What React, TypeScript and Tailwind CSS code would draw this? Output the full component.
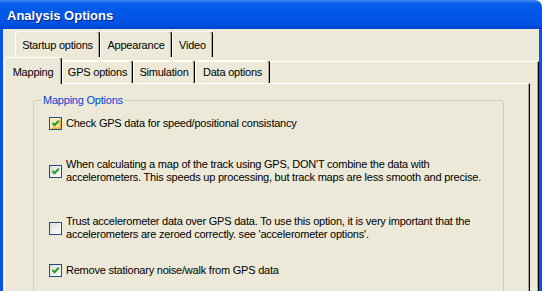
import React from "react";

const Check = ({ checked, hot }: { checked: boolean; hot?: boolean }) => (
  <span
    className={
      hot
        ? "flex h-[13px] w-[13px] shrink-0 items-center justify-center border border-[#1c5180] bg-[linear-gradient(135deg,#fff0cf,#fbd58a)] shadow-[inset_1px_1px_0_#fff0cf,inset_-1px_-1px_0_#f8b330,inset_2px_2px_0_#fde2a8,inset_-2px_-2px_0_#f9c566]"
        : "flex h-[13px] w-[13px] shrink-0 items-center justify-center border border-[#1c5180] bg-[linear-gradient(135deg,#dcdcd7,#ffffff)]"
    }
  >
    {checked && (
      <svg width="11" height="11" viewBox="0 0 11 11">
        <path d="M2.5 5 L4.5 7.2 L8.8 2.8" fill="none" stroke="#21a121" strokeWidth="2" />
      </svg>
    )}
  </span>
);

const BackTab = ({ label, w }: { label: string; w: string }) => (
  <div
    className={`${w} flex h-[26px] justify-center rounded-t-[3px] border-l border-t border-r border-l-white border-t-white border-r-black pt-[7px] shadow-[inset_-1px_0_0_#aca899]`}
  >
    {label}
  </div>
);

const FrontTab = ({ label, w }: { label: string; w: string }) => (
  <div
    className={`${w} flex h-[23px] justify-center rounded-t-[3px] border-l border-t border-r border-l-white border-t-white border-r-black pt-[5px] shadow-[inset_-1px_0_0_#aca899]`}
  >
    {label}
  </div>
);

export default function App() {
  return (
    <div className="flex h-[291px] w-[542px] flex-col overflow-hidden font-['Liberation_Sans',Arial,sans-serif] text-[11px] leading-[13px] tracking-[-0.22px] text-black">
      <div className="flex h-[29px] shrink-0 items-center rounded-tr-[7px] bg-[linear-gradient(180deg,#3d8bf8_0%,#0a5ee8_12%,#0058e8_45%,#0053e2_80%,#0043d2_100%)] pl-[7px] pt-[2px] text-[13px] font-bold tracking-[0px] text-white [text-shadow:1px_1px_#0a1f8a]">
        Analysis Options
      </div>
      <div className="flex flex-1 flex-col border-l-[3px] border-r-[3px] border-l-[#0a52e6] border-r-[#0a52e6] bg-[#ece9d8]">
        <div className="ml-[12px] mt-[2px] flex">
          <BackTab label="Startup options" w="w-[85px]" />
          <BackTab label="Appearance" w="w-[72px]" />
          <BackTab label="Video" w="w-[41px]" />
        </div>
        <div className="mt-[4px] flex flex-1 flex-col border-t border-r border-t-white border-r-black shadow-[inset_-1px_0_0_#aca899]">
          <div className="-mt-[5px] ml-[1px] flex h-[26px] items-end">
            <div className="relative z-10 -mb-[1px] flex h-[27px] w-[58px] justify-center rounded-t-[3px] border-l border-t border-r border-l-white border-t-white border-r-black bg-[#ece9d8] pt-[8px] shadow-[inset_-1px_0_0_#aca899]">
              Mapping
            </div>
            <FrontTab label="GPS options" w="w-[71px]" />
            <FrontTab label="Simulation" w="w-[62px]" />
            <FrontTab label="Data options" w="w-[75px]" />
          </div>
          <div className="ml-[1px] flex w-[526px] flex-1 flex-col border-l border-t border-r border-l-white border-t-white border-r-black shadow-[inset_-1px_0_0_#aca899]">
            <fieldset className="ml-[28px] mt-[10px] h-[240px] w-[471px] rounded-[3px] border border-[#d0d0bf] pl-[15px]">
              <legend className="-ml-[7px] px-[1px] text-[#0046d5]">Mapping Options</legend>
              <div className="mt-[10px] flex items-center gap-[4px]">
                <Check checked hot />
                <span>Check GPS data for speed/positional consistancy</span>
              </div>
              <div className="mt-[28px] flex items-center gap-[4px]">
                <Check checked />
                <span>
                  When calculating a map of the track using GPS, DON'T combine the data with
                  <br />
                  accelerometers. This speeds up processing, but track maps are less smooth and precise.
                </span>
              </div>
              <div className="mt-[31px] flex items-center gap-[4px]">
                <Check checked={false} />
                <span>
                  Trust accelerometer data over GPS data. To use this option, it is very important that the
                  <br />
                  accelerometers are zeroed correctly. see 'accelerometer options'.
                </span>
              </div>
              <div className="mt-[23px] flex items-center gap-[4px]">
                <Check checked />
                <span>Remove stationary noise/walk from GPS data</span>
              </div>
            </fieldset>
          </div>
        </div>
      </div>
    </div>
  );
}
